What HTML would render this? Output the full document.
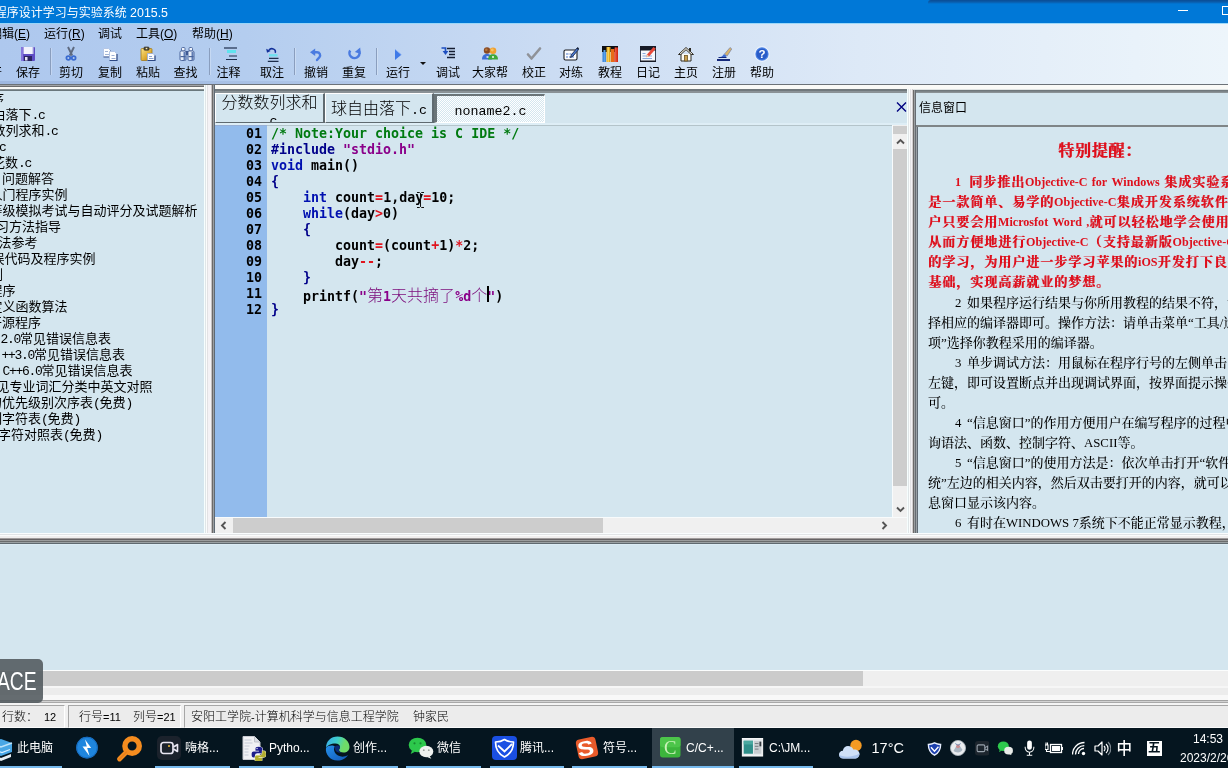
<!DOCTYPE html>
<html lang="zh-CN">
<head>
<meta charset="utf-8">
<title>C/C++程序设计学习与实验系统 2015.5</title>
<style>
*{box-sizing:border-box;margin:0;padding:0}
html,body{width:1228px;height:768px;overflow:hidden;background:#d4e6ef}
body{will-change:transform;position:relative;font-family:"Liberation Sans","Noto Sans CJK SC",sans-serif;font-size:12px;color:#000}
.abs{position:absolute}
.nw{white-space:nowrap}
#title{left:0;top:0;width:1228px;height:23px;background:#0078d7;overflow:hidden}
#title .t{right:1060px;top:3.500px;color:#fff;font-size:12px;line-height:18px}
#title .t span{font-size:12.400px}
#bar{left:0;top:23px;width:1228px;height:61px;background:linear-gradient(rgba(150,215,250,.9),rgba(150,215,250,.9)) 0 0/100% 1px no-repeat,linear-gradient(90deg,rgba(80,100,150,.16),rgba(80,100,150,0) 70%) 0 100%/100% 3px no-repeat,linear-gradient(90deg,#aec8ee 0%,#b4cdef 20%,#cbdcf3 45%,#dde9f7 70%,#edf5fb 100%)}
.menu{top:1.500px;font-size:12px;line-height:18px;color:#000}
.menu u{text-decoration-thickness:1px;text-underline-offset:1px}
.tl{top:43px;font-size:12px;line-height:14px;width:48px;text-align:center;color:#000}
.tsep{top:25px;width:1px;height:27px;background:#8a9ebe;box-shadow:1px 0 0 rgba(255,255,255,.25)}
.ti{top:23px;width:16px;height:16px}
/* frames */
.g{background:#7f8587}
.w{background:#f4f6f7}
/* left list */
#left{left:0;top:91px;width:204px;height:442px;background:#d4e6ef;overflow:hidden;font-family:"Liberation Mono","Noto Sans CJK SC",sans-serif;font-weight:400;font-size:13px}
#left div{position:absolute;white-space:nowrap;line-height:16px;height:16px}
#left .a{letter-spacing:-1.3px}
/* editor */
#tabs{left:215px;top:93px;width:692px;height:30px;background:#d4e6ef}
.tab{top:0;height:30px;border-left:1px solid #fff;border-top:1px solid #fff;border-right:2px solid #5f6a70;border-bottom:1px solid #5f6a70;font-family:"Liberation Mono","Noto Sans CJK SC",sans-serif;font-weight:300;font-size:16px;text-align:center;overflow:hidden;background:#d4e6ef}
.tab.act{top:1px;height:29px;border-left:3px solid #6a7478;border-top:2px solid #6a7478;border-right:1px solid #fff;border-bottom:1px solid #fff;background-color:#e9f2f7;background-image:conic-gradient(#fff 25%,#d4e6ef 0 50%,#fff 0 75%,#d4e6ef 0);background-size:2px 2px}
.tab .a{font-size:13.300px}
#gutter{left:215px;top:125px;width:52px;height:392px;background:#92bbec;border-top:1px solid #98b0d6}
#code{left:267px;top:125px;width:625px;height:392px;background:#d4e6ef;border-top:1px solid #b4c4ca}
.ln,.cl{position:absolute;white-space:pre;font-family:"DejaVu Sans Mono","Liberation Mono",monospace;font-weight:bold;font-size:13.3px;line-height:16px;height:16px;letter-spacing:0}
.ln{right:5px}
.cl{left:4px}
.c-cm{color:#007a10}.c-pp{color:#00008a}.c-st{color:#8a008a}.c-kw{color:#0010b0}.c-op{color:#e0141e}.c-br{color:#00008a}
.zh{font-family:"Noto Sans CJK SC",sans-serif;font-weight:300;font-size:16px;letter-spacing:0;color:#7a0a7a}
/* scrollbars */
.sb{background:#f0f0f0}
.th{background:#cdcdcd}
/* info */
#infoh{left:916px;top:93px;width:312px;height:32px;background:#d4e6ef;font-size:12px;line-height:32px}
#info{left:918px;top:127px;width:310px;height:406px;background:#d4e6ef;overflow:hidden;font-family:"Liberation Serif","Noto Serif CJK SC",serif;font-size:13px}
#info div{position:absolute;white-space:nowrap;line-height:20px;height:20px;left:10px}
#info .r{color:#de0f1c;font-weight:600;letter-spacing:1px;text-shadow:.8px 0 0 #de0f1c}
#info .k{color:#000;font-weight:500}
#info .r .e{letter-spacing:0;font-size:12.100px;font-weight:bold;text-shadow:none}
#info .k .e{font-size:12.800px}
/* status */
#status{left:0;top:705px;width:1228px;height:23px;background:#f0f0f0}
.sp{top:0;height:23px;border-left:1px solid #a6a6a6;border-top:1px solid #a6a6a6;border-right:1px solid #fff;border-bottom:1px solid #fafafa;font-family:"Liberation Sans","Noto Sans CJK SC",sans-serif;font-weight:300;color:#000;font-size:12px;line-height:22px;background:#ececec}
.sp span{position:absolute;white-space:nowrap;top:0}
.sp span.e,.sp span span.e{font-size:11px}
.sp span span{position:static}
/* taskbar */
#task{left:0;top:728px;width:1228px;height:40px;background:#05151f;color:#fff;font-size:12px}
.tb{top:0;height:40px}
.tb .ul{position:absolute;left:0;right:0;bottom:0;height:2px;background:#76b9ed}
.tb .lab{position:absolute;left:36px;top:12px;line-height:16px;white-space:nowrap;color:#fff;font-size:12px}
.tb svg{position:absolute;left:6px;top:8px;width:24px;height:24px}
</style>
</head>
<body>
<div id="title" class="abs"><div class="abs t nw">C/C++程序设计学习与实验系统 <span>2015.5</span></div><div class="abs" style="left:1178px;top:10px;width:10px;height:1px;background:#fff"></div><div class="abs" style="left:1222px;top:6px;width:10px;height:9px;border:1px solid #fff"></div><div class="abs" style="left:928px;top:0;width:300px;height:4px;background:linear-gradient(#0a4c94,#0a5cab 50%,rgba(0,120,215,0));border-top-left-radius:3px"></div></div>
<div id="bar" class="abs"><div class="abs menu nw" style="left:-10px">编辑(<u>E</u>)</div><div class="abs menu nw" style="left:44px">运行(<u>R</u>)</div><div class="abs menu nw" style="left:98px">调试</div><div class="abs menu nw" style="left:136px">工具(<u>O</u>)</div><div class="abs menu nw" style="left:192px">帮助(<u>H</u>)</div><div class="abs tl nw" style="left:4px">保存</div><svg class="abs ti" style="left:20px" viewBox="0 0 16 16"><rect x="1" y="1" width="14" height="14" rx="1" fill="#5d4cc4"/><path d="M1 2a1 1 0 0 1 1-1h1v14h-1a1 1 0 0 1-1-1z" fill="#8576dc"/><rect x="3.500" y="1" width="8.500" height="7" fill="#f1f2fc"/><rect x="12" y="1" width="1.500" height="7" fill="#cfd0ee"/><rect x="4" y="10" width="8" height="5" fill="#2b2360"/><rect x="5" y="11" width="2.500" height="3.500" fill="#e6e6f6"/></svg><div class="abs tl nw" style="left:47px">剪切</div><svg class="abs ti" style="left:63px" viewBox="0 0 16 16"><path d="M5 1l4.200 8.500M11 1l-4.200 8.500" stroke="#5e6a80" stroke-width="1.900" fill="none"/><circle cx="5.300" cy="12" r="1.900" fill="none" stroke="#3a6bd0" stroke-width="1.800"/><circle cx="10.700" cy="12" r="1.900" fill="none" stroke="#3a6bd0" stroke-width="1.800"/></svg><div class="abs tl nw" style="left:86px">复制</div><svg class="abs ti" style="left:102px" viewBox="0 0 16 16"><path d="M1.500 2.500h5l2 2v6.500h-7z" fill="#fdfeff" stroke="#b4c6e6" stroke-width="1"/><path d="M8.500 4.500v6.500h-7" fill="none" stroke="#3a568f" stroke-width="1"/><path d="M3 5.500h3M3 8.500h4" stroke="#8aa2cc" stroke-width=".800"/><path d="M7.500 5.500h5l2.500 2.500v6.500h-7.500z" fill="#fdfeff" stroke="#b4c6e6" stroke-width="1"/><path d="M15 8v6.500h-7.500" fill="none" stroke="#2c4884" stroke-width="1.200"/><path d="M9.500 9.500h3M9.500 12.500h4" stroke="#7f98c6" stroke-width=".800"/></svg><div class="abs tl nw" style="left:124px">粘贴</div><svg class="abs ti" style="left:140px" viewBox="0 0 16 16"><defs><linearGradient id="pg" x1="0" y1="0" x2="1" y2="1"><stop offset="0" stop-color="#fbe58a"/><stop offset=".55" stop-color="#e0ae35"/><stop offset="1" stop-color="#a87818"/></linearGradient></defs><rect x="1" y="2.500" width="11" height="12" rx="1" fill="url(#pg)" stroke="#a07a20" stroke-width=".800"/><rect x="4" y="1" width="5" height="3.200" rx=".800" fill="#4a4536" stroke="#2c2a20" stroke-width=".600"/><rect x="5.700" y="1.800" width="1.600" height="1.400" fill="#f4e8b8"/><path d="M7.500 7.500h5.500l2 2v5h-7.500z" fill="#fdfdff" stroke="#9fb0d4" stroke-width=".900"/><path d="M15 9.500v5h-7.500" fill="none" stroke="#2c4884" stroke-width="1.200"/><path d="M9 10.500h3M9 12.500h4.500" stroke="#7f98c6" stroke-width=".900"/></svg><div class="abs tl nw" style="left:161.5px">查找</div><svg class="abs ti" style="left:179px" viewBox="0 0 16 16"><rect x="2.500" y="1.500" width="3.500" height="3.500" rx="1" fill="#eef3fb" stroke="#48639a" stroke-width=".900"/><rect x="10" y="1.500" width="3.500" height="3.500" rx="1" fill="#eef3fb" stroke="#48639a" stroke-width=".900"/><rect x="6.500" y="5" width="3" height="4" fill="#3f5a94"/><rect x="1" y="5" width="6" height="9.500" rx="1.300" fill="#e6edf8" stroke="#3f5a94" stroke-width=".900"/><rect x="9" y="5" width="6" height="9.500" rx="1.300" fill="#e6edf8" stroke="#3f5a94" stroke-width=".900"/><rect x="4.500" y="6" width="2" height="8" fill="#5f7cb4"/><rect x="12.500" y="6" width="2" height="8" fill="#5f7cb4"/><rect x="1.500" y="10" width="5" height="1.200" fill="#48639a"/><rect x="9.500" y="10" width="5" height="1.200" fill="#48639a"/></svg><div class="abs tl nw" style="left:204.5px">注释</div><svg class="abs ti" style="left:221px" viewBox="0 0 16 16"><path d="M3 2h13" stroke="#1d2c4a" stroke-width="1.200"/><path d="M6 5.500h9" stroke="#5fe2ee" stroke-width="3"/><path d="M8 10h8M5 13.500h11" stroke="#1d2c4a" stroke-width="1.200"/></svg><div class="abs tl nw" style="left:248px">取注</div><svg class="abs ti" style="left:264px" viewBox="0 0 16 16"><path d="M11 6.800a3.400 2.700 0 1 0-6-2.600" fill="none" stroke="#12309a" stroke-width="1.600"/><path d="M2.200 2.800l.800 4 3.600-1.800z" fill="#12309a"/><path d="M5 9.300h8.500" stroke="#6fe0ee" stroke-width="2.400"/><path d="M5 12.400h9.500M3.800 15.400h10.700" stroke="#1d2c4a" stroke-width="1.100"/></svg><div class="abs tl nw" style="left:292px">撤销</div><svg class="abs ti" style="left:308px" viewBox="0 0 16 16"><path d="M5.500 6.200h3.500a3.100 3.100 0 0 1 2.400 5.100l-2.400 2.700" fill="none" stroke="#4a7be0" stroke-width="2.400" stroke-linecap="round"/><path d="M7.200 2.500l-5.200 3.800 5.200 3.600z" fill="#4a7be0"/></svg><div class="abs tl nw" style="left:330px">重复</div><svg class="abs ti" style="left:346px" viewBox="0 0 16 16"><path d="M4.200 4.500a5 5 0 1 0 8.200-.500" fill="none" stroke="#4a7be0" stroke-width="2.500"/><path d="M8.800 6l5.400-4.500 .600 6.500z" fill="#4a7be0"/></svg><div class="abs tl nw" style="left:374px">运行</div><svg class="abs ti" style="left:390px" viewBox="0 0 16 16"><path d="M5 3.300l6.400 5.400-6.400 5.400z" fill="#3f7ae8"/><path d="M5 3.300l6.400 5.400" stroke="#8fb4f4" stroke-width=".800"/></svg><div class="abs tl nw" style="left:424px">调试</div><svg class="abs ti" style="left:440px" viewBox="0 0 16 16"><path d="M7 2.500h8M9 5.500h6M9 8.500h6M7 11.500h8" stroke="#141c30" stroke-width="1.400"/><path d="M1.500 2h4v4" fill="none" stroke="#1e4fc0" stroke-width="1.700"/><path d="M2.600 5l2.900 4 2.900-4z" fill="#1e4fc0"/></svg><div class="abs tl nw" style="left:466px">大家帮</div><svg class="abs ti" style="left:482px" viewBox="0 0 16 16"><circle cx="5" cy="4.500" r="3.200" fill="#8a4a22"/><circle cx="4.300" cy="3.800" r="1.300" fill="#c98a4a" opacity=".7"/><path d="M0 13.500c0-4 2.200-5.500 5-5.500s5 1.500 5 5.500z" fill="#3d6fd6"/><circle cx="11" cy="4.800" r="3.300" fill="#f0a030"/><circle cx="10.300" cy="4" r="1.400" fill="#f8cc70" opacity=".8"/><path d="M6 13.500c0-3.700 2.200-5.200 5-5.200s5 1.500 5 5.200z" fill="#3fa83a"/><rect x="4.500" y="10" width="2" height="2" fill="#fff" opacity=".7"/><rect x="10" y="10" width="2" height="2" fill="#fff" opacity=".7"/></svg><div class="abs tl nw" style="left:510px">校正</div><svg class="abs ti" style="left:526px" viewBox="0 0 16 16"><path d="M2 8.500l3.500 4 8.500-10" fill="none" stroke="#8f9298" stroke-width="2.600" stroke-linecap="round" stroke-linejoin="round"/></svg><div class="abs tl nw" style="left:547px">对练</div><svg class="abs ti" style="left:563px" viewBox="0 0 16 16"><rect x="1" y="4" width="13" height="10" rx="1.500" fill="#fdfdfd" stroke="#1b1d22" stroke-width="1.100"/><path d="M3 8h2.500M6.500 8h2M3 11h2M6 11h5" stroke="#4d78cc" stroke-width="1.200"/><path d="M7.500 11.500l.800-2.700 6-7 1.600 1.400-6 7z" fill="#4a78d0" stroke="#16213a" stroke-width=".800"/><path d="M13.500 2.600l1.200-1.400 1.300 1.100-1.200 1.400z" fill="#16213a"/></svg><div class="abs tl nw" style="left:586px">教程</div><svg class="abs ti" style="left:602px" viewBox="0 0 16 16"><rect x="0" y="0" width="16" height="6" fill="#0d0e12"/><rect x=".500" y="6" width="3.500" height="10" fill="#2f7bd4"/><rect x="1.500" y="4" width="2" height="12" fill="#5aa0ea"/><rect x="4.500" y="1" width="4" height="15" fill="#e5a81c"/><rect x="5.500" y="1" width="1.500" height="15" fill="#f8d25a"/><rect x="9" y="3" width="3.500" height="13" fill="#e86a18"/><rect x="12.500" y="1.500" width="3.500" height="14.500" fill="#d42b16"/><rect x="13.200" y="1.500" width="1.200" height="14.500" fill="#f0604a"/></svg><div class="abs tl nw" style="left:624px">日记</div><svg class="abs ti" style="left:640px" viewBox="0 0 16 16"><rect x=".500" y=".500" width="15" height="15" fill="#f6f8fd" stroke="#3b4254" stroke-width="1"/><rect x="0" y="0" width="16" height="4.500" fill="#161a26"/><rect x="0" y="14.500" width="16" height="1.500" fill="#161a26"/><path d="M2.500 7.500h3M2.500 10h9.500M2.500 12.500h9.500" stroke="#8aa8dc" stroke-width="1.200"/><path d="M7 8.500l6.500-7.500 2.300 1.800-6.500 7.500-2.800.900z" fill="#e8483a"/><path d="M7 8.500l-.500 2.700 2.800-.900z" fill="#f3d9b0"/></svg><div class="abs tl nw" style="left:662px">主页</div><svg class="abs ti" style="left:678px" viewBox="0 0 16 16"><path d="M3 8v7h10v-7" fill="#fbfaf4" stroke="#2d2a22" stroke-width="1"/><path d="M8 1.500l7.500 7h-2.300l-5.200-4.800-5.200 4.800h-2.300z" fill="#fffdf2" stroke="#2d2a22" stroke-width="1" stroke-linejoin="round"/><rect x="11" y="2" width="2" height="3.500" fill="#2d2a22"/><rect x="6.500" y="9.500" width="3" height="5.500" fill="#c9a050" stroke="#6a5424" stroke-width=".800"/></svg><div class="abs tl nw" style="left:700px">注册</div><svg class="abs ti" style="left:716px" viewBox="0 0 16 16"><path d="M1 14h13" stroke="#14287a" stroke-width="2"/><path d="M2.500 11.500c2.500-.300 4.500-1.500 5.500-3.500l2.800 2c-1.500 2-4.800 2.500-8.300 1.500z" fill="#3a68d0"/><path d="M8.500 8l5.500-6.500 1.800 1.400-4.600 7z" fill="#d9b36a" stroke="#6a78a8" stroke-width=".600"/><path d="M2.500 11.500h8" stroke="#14287a" stroke-width="1"/></svg><div class="abs tl nw" style="left:738px">帮助</div><svg class="abs ti" style="left:754px" viewBox="0 0 16 16"><circle cx="8" cy="8" r="7.300" fill="#4d84e4" stroke="#eaf1fc" stroke-width="1.300"/><circle cx="8" cy="8" r="5.600" fill="#2a5cc8"/><text x="8" y="12.200" font-family="Liberation Sans,sans-serif" font-weight="700" font-size="11.500" text-anchor="middle" fill="#fff">?</text></svg><div class="abs tsep" style="left:50px"></div><div class="abs tsep" style="left:209px"></div><div class="abs tsep" style="left:294px"></div><div class="abs tsep" style="left:376px"></div><div class="abs" style="left:420px;top:39px;width:0;height:0;border-left:3px solid transparent;border-right:3px solid transparent;border-top:3px solid #111"></div><div class="abs nw" style="left:-10px;top:43px;font-size:12px;line-height:14px">开</div></div>
<div class="abs" style="left:0px;top:84px;width:1228px;height:1px;background:#6c7278"></div><div class="abs" style="left:0px;top:85px;width:1228px;height:4px;background:#fafaf7"></div><div class="abs" style="left:0px;top:85px;width:204px;height:1px;background:#a2a3a6"></div><div class="abs" style="left:0px;top:86px;width:204px;height:1px;background:#6c6c6c"></div><div class="abs" style="left:0px;top:87px;width:204px;height:2px;background:#fafaf7"></div><div class="abs" style="left:0px;top:89px;width:204px;height:1px;background:#8a9296"></div><div class="abs" style="left:0px;top:90px;width:204px;height:1px;background:#6a787c"></div><div class="abs" style="left:212px;top:89px;width:695px;height:2px;background:#70787c"></div><div class="abs" style="left:212px;top:91px;width:695px;height:2px;background:#8a9296"></div><div class="abs" style="left:913px;top:89px;width:315px;height:1px;background:#dfe3e3"></div><div class="abs" style="left:913px;top:90px;width:315px;height:1px;background:#70787c"></div><div class="abs" style="left:913px;top:91px;width:315px;height:1px;background:#7c8488"></div><div class="abs" style="left:913px;top:92px;width:315px;height:1px;background:#8a9296"></div><div class="abs" style="left:204px;top:85px;width:1px;height:453px;background:#f6fefe"></div><div class="abs" style="left:205px;top:85px;width:1px;height:453px;background:#e0e6e8"></div><div class="abs" style="left:206px;top:85px;width:1px;height:453px;background:#fafcfc"></div><div class="abs" style="left:207px;top:85px;width:1px;height:453px;background:#e2e2e4"></div><div class="abs" style="left:208px;top:85px;width:3px;height:453px;background:#f4f2f5"></div><div class="abs" style="left:211px;top:85px;width:1px;height:453px;background:#c4c2c2"></div><div class="abs" style="left:212px;top:85px;width:1px;height:453px;background:#6c6a6a"></div><div class="abs" style="left:213px;top:85px;width:1px;height:453px;background:#9a9ea0"></div><div class="abs" style="left:214px;top:85px;width:1px;height:453px;background:#5f6a74"></div><div class="abs" style="left:907px;top:89px;width:1px;height:449px;background:#f6fefe"></div><div class="abs" style="left:908px;top:89px;width:1px;height:449px;background:#e0e6e8"></div><div class="abs" style="left:909px;top:89px;width:1px;height:449px;background:#fafcfc"></div><div class="abs" style="left:910px;top:89px;width:1px;height:449px;background:#e2e2e4"></div><div class="abs" style="left:911px;top:89px;width:1px;height:449px;background:#f4f2f5"></div><div class="abs" style="left:912px;top:89px;width:1px;height:449px;background:#d0cece"></div><div class="abs" style="left:913px;top:90px;width:1px;height:448px;background:#6c6a6a"></div><div class="abs" style="left:914px;top:90px;width:1px;height:448px;background:#9a9ea0"></div><div class="abs" style="left:915px;top:90px;width:1px;height:448px;background:#666c72"></div><div class="abs" style="left:916px;top:125px;width:1px;height:408px;background:#9aa0a4"></div><div class="abs" style="left:917px;top:125px;width:1px;height:408px;background:#5f6a74"></div><div class="abs" style="left:0px;top:533px;width:1228px;height:1px;background:#fafdfe"></div><div class="abs" style="left:0px;top:534px;width:1228px;height:1px;background:#e2e4e6"></div><div class="abs" style="left:0px;top:535px;width:1228px;height:1px;background:#fbfcfc"></div><div class="abs" style="left:0px;top:536px;width:1228px;height:2px;background:#f0eeee"></div><div class="abs" style="left:0px;top:538px;width:1228px;height:1px;background:#a09c9c"></div><div class="abs" style="left:0px;top:539px;width:1228px;height:1px;background:#666264"></div><div class="abs" style="left:0px;top:540px;width:1228px;height:1px;background:#9a9c9c"></div><div class="abs" style="left:0px;top:541px;width:1228px;height:1px;background:#6a6c6c"></div><div class="abs" style="left:0px;top:542px;width:1228px;height:1px;background:#9aa0a2"></div><div class="abs" style="left:0px;top:543px;width:1228px;height:1px;background:#5f6a70"></div><div class="abs" style="left:0px;top:544px;width:1228px;height:1px;background:#dcecf4"></div>
<div id="left" class="abs"><div style="right:200px;top:1px">序</div><div style="right:159.5px;top:17px">自由落下<span class="a">.c</span></div><div style="right:146.5px;top:33px">数数列求和<span class="a">.c</span></div><div style="right:198.5px;top:49px"><span class="a">.c</span></div><div style="right:173px;top:65px">仙花数<span class="a">.c</span></div><div style="right:150px;top:81px">目问题解答</div><div style="right:136.5px;top:97px">入门程序实例</div><div style="right:6.5px;top:113px">等级模拟考试与自动评分及试题解析</div><div style="right:143px;top:129px">习方法指导</div><div style="right:166.5px;top:145px">语法参考</div><div style="right:108.5px;top:161px">误代码及程序实例</div><div style="right:201px;top:177px">例</div><div style="right:188.5px;top:193px">程序</div><div style="right:136.5px;top:209px">定义函数算法</div><div style="right:163px;top:225px">开源程序</div><div style="right:93px;top:241px"><span class="a">2.0</span>常见错误信息表</div><div style="right:79px;top:257px"><span class="a">++3.0</span>常见错误信息表</div><div style="right:71.5px;top:273px"><span class="a">C++6.0</span>常见错误信息表</div><div style="right:51.5px;top:289px">常见专业词汇分类中英文对照</div><div style="right:72px;top:305px">的优先级别次序表<span class="a">(</span>免费<span class="a">)</span></div><div style="right:124px;top:321px">制字符表<span class="a">(</span>免费<span class="a">)</span></div><div style="right:102px;top:337px"><span class="a">I</span>字符对照表<span class="a">(</span>免费<span class="a">)</span></div></div>
<div id="tabs" class="abs"><div class="abs tab" style="left:0;width:110px;line-height:17px;white-space:normal;padding-top:2px">分数数列求和<br><span class="a">.c</span></div><div class="abs tab" style="left:110px;width:109px;line-height:33px">球自由落下<span class="a">.c</span></div><div class="abs tab act" style="left:219px;width:111px;line-height:31px"><span class="a">noname2.c</span></div><svg class="abs" style="left:681px;top:9px;width:11px;height:10px" viewBox="0 0 11 10"><path d="M1 .500l9 9M10 .500l-9 9" stroke="#000080" stroke-width="1.400"/></svg></div>
<div class="abs" style="left:215px;top:123px;width:692px;height:2px;background:#deeef6"></div>
<div id="gutter" class="abs"><div class="ln" style="top:0px">01</div><div class="ln" style="top:16px">02</div><div class="ln" style="top:32px">03</div><div class="ln" style="top:48px">04</div><div class="ln" style="top:64px">05</div><div class="ln" style="top:80px">06</div><div class="ln" style="top:96px">07</div><div class="ln" style="top:112px">08</div><div class="ln" style="top:128px">09</div><div class="ln" style="top:144px">10</div><div class="ln" style="top:160px">11</div><div class="ln" style="top:176px">12</div></div>
<div id="code" class="abs"><div class="cl" style="top:0px"><span class="c-cm">/* Note:Your choice is C IDE */</span></div><div class="cl" style="top:16px"><span class="c-pp">#include </span><span class="c-st">&quot;stdio.h&quot;</span></div><div class="cl" style="top:32px"><span class="c-kw">void</span> main()</div><div class="cl" style="top:48px"><span class="c-br">{</span></div><div class="cl" style="top:64px">    <span class="c-kw">int</span> count<span class="c-op">=</span>1,day<span class="c-op">=</span>10;</div><div class="cl" style="top:80px">    <span class="c-kw">while</span>(day<span class="c-op">&gt;</span>0)</div><div class="cl" style="top:96px">    <span class="c-br">{</span></div><div class="cl" style="top:112px">        count<span class="c-op">=</span>(count<span class="c-op">+</span>1)<span class="c-op">*</span>2;</div><div class="cl" style="top:128px">        day<span class="c-op">--</span>;</div><div class="cl" style="top:144px">    <span class="c-br">}</span></div><div class="cl" style="top:160px">    printf(<span class="c-st">&quot;<span class="zh">第</span>1<span class="zh">天共摘了</span>%d<span class="zh">个</span>&quot;</span>)</div><div class="cl" style="top:176px"><span class="c-br">}</span></div><div class="abs" style="left:220px;top:160px;width:2px;height:16px;background:#000"></div><svg class="abs" style="left:150px;top:66px;width:7px;height:16px" viewBox="0 0 7 16"><path d="M0 .500h2.500l1 1 1-1h2.500M3.500 1.500v13M0 15.500h2.500l1-1 1 1h2.500" fill="none" stroke="#111" stroke-width="1"/></svg></div>
<div class="abs sb" style="left:892px;top:125px;width:15px;height:392px;border-left:1px solid #f8fbfc"></div><div class="abs th" style="left:893px;top:126px;width:14px;height:360px"></div><div class="abs sb" style="left:893px;top:134px;width:14px;height:15px"></div><svg class="abs" style="left:896.0px;top:138.0px;width:9px;height:7px" viewBox="0 0 9 7"><path d="M1 5.500l3.500-3.500 3.500 3.500" fill="none" stroke="#555" stroke-width="1.900"/></svg><svg class="abs" style="left:896.0px;top:505.5px;width:9px;height:7px" viewBox="0 0 9 7"><path d="M1 1.500l3.500 3.500 3.500-3.500" fill="none" stroke="#555" stroke-width="1.900"/></svg><div class="abs sb" style="left:215px;top:517px;width:692px;height:16px;border-top:1px solid #f8fbfc"></div><div class="abs th" style="left:233px;top:518px;width:370px;height:15px"></div><svg class="abs" style="left:220.0px;top:521.0px;width:7px;height:9px" viewBox="0 0 7 9"><path d="M5.500 1l-3.500 3.500 3.500 3.500" fill="none" stroke="#555" stroke-width="1.900"/></svg><svg class="abs" style="left:880.5px;top:521.0px;width:7px;height:9px" viewBox="0 0 7 9"><path d="M1.500 1l3.500 3.500-3.500 3.500" fill="none" stroke="#555" stroke-width="1.900"/></svg>
<div id="infoh" class="abs nw"><span style="position:absolute;left:3px;top:-1px;font-size:12px">信息窗口</span></div>
<div class="abs g" style="left:916px;top:125px;width:312px;height:2px"></div>
<div id="info" class="abs"><div class="r" style="left:140px;top:14px;font-size:16px;letter-spacing:.7px">特别提醒：</div><div class="r" style="top:45px"><span style="margin-left:27px"><span class="e">1</span></span><span style="margin-left:8px">同步推出<span class="e">Objective-C</span> <span class="e">for</span> <span class="e">Windows</span> 集成实验系统，它</span></div><div class="r" style="top:65px">是一款简单、易学的<span class="e">Objective-C</span>集成开发系统软件。用</div><div class="r" style="top:85px">户只要会用<span class="e">Microsfot</span> <span class="e">Word</span> <span class="e">,</span>就可以轻松地学会使用它，</div><div class="r" style="top:105px">从而方便地进行<span class="e">Objective-C</span>（支持最新版<span class="e">Objective-C</span> <span class="e">2.0</span>）</div><div class="r" style="top:125px">的学习，为用户进一步学习苹果的<span class="e">iOS</span>开发打下良好的</div><div class="r" style="top:145px">基础，实现高薪就业的梦想。</div><div class="k" style="top:166px"><span style="margin-left:27px"><span class="e">2</span></span><span style="margin-left:5.500px">如果程序运行结果与你所用教程的结果不符，请选</span></div><div class="k" style="top:186px">择相应的编译器即可。操作方法：请单击菜单“工具<span class="e">/</span>选</div><div class="k" style="top:206px">项”选择你教程采用的编译器。</div><div class="k" style="top:226px"><span style="margin-left:27px"><span class="e">3</span></span><span style="margin-left:5.500px">单步调试方法：用鼠标在程序行号的左侧单击鼠标</span></div><div class="k" style="top:246px">左键，即可设置断点并出现调试界面，按界面提示操作即</div><div class="k" style="top:266px">可。</div><div class="k" style="top:286px"><span style="margin-left:27px"><span class="e">4</span></span><span style="margin-left:5.500px">“信息窗口”的作用方便用户在编写程序的过程中查</span></div><div class="k" style="top:306px">询语法、函数、控制字符、<span class="e">ASCII</span>等。</div><div class="k" style="top:326px"><span style="margin-left:27px"><span class="e">5</span></span><span style="margin-left:5.500px">“信息窗口”的使用方法是：依次单击打开“软件系</span></div><div class="k" style="top:346px">统”左边的相关内容，然后双击要打开的内容，就可以在信</div><div class="k" style="top:366px">息窗口显示该内容。</div><div class="k" style="top:386px"><span style="margin-left:27px"><span class="e">6</span></span><span style="margin-left:5.500px">有时在<span class="e">WINDOWS</span> <span class="e">7</span>系统下不能正常显示教程，解决</span></div></div>
<div class="abs" style="left:0;top:670px;width:1228px;height:1px;background:#fbfdfd"></div><div class="abs" style="left:0;top:671px;width:1228px;height:15px;background:#efefef"></div><div class="abs" style="left:0;top:671px;width:863px;height:15px;background:#cbcbcb"></div><div class="abs" style="left:0;top:686px;width:1228px;height:2px;background:#f6f6f6"></div><div class="abs" style="left:0;top:688px;width:1228px;height:7px;background:#ececec"></div><div class="abs" style="left:0;top:695px;width:1228px;height:5px;background:#f8f8f8"></div><div class="abs" style="left:0;top:700px;width:1228px;height:1px;background:#a2a2a2"></div><div class="abs" style="left:0;top:701px;width:1228px;height:1px;background:#d2d2d2"></div><div class="abs" style="left:0;top:702px;width:1228px;height:1px;background:#a8a8a8"></div><div class="abs" style="left:0;top:703px;width:1228px;height:2px;background:#f4f4f4"></div>
<div id="status" class="abs"><div class="abs sp" style="left:-2px;width:67px"><span style="left:3px">行数：</span><span style="left:45px" class="e">12</span></div><div class="abs sp" style="left:68px;width:113px"><span style="left:10px">行号<span class="e">=11</span></span><span style="left:64px">列号<span class="e">=21</span></span></div><div class="abs sp" style="left:184px;width:1046px"><span style="left:6px">安阳工学院<span class="e">-</span>计算机科学与信息工程学院</span><span style="left:228px">钟家民</span></div></div>
<div class="abs" style="left:-10px;top:659px;width:53px;height:44px;border-radius:5px;background:rgba(84,92,96,.9);color:#fff;font-size:26px;line-height:44px;font-family:'Liberation Sans',sans-serif;white-space:nowrap"><span style="position:absolute;left:6.700px;top:0;transform-origin:0 50%;transform:scaleX(.74)">ACE</span></div>
<div id="task" class="abs"><div class="abs tb" style="left:-21px;width:83px;"><svg style="left:9px;top:9px;width:26px;height:24px" viewBox="0 0 26 24"><path d="M2 6l11-4 11 4v9l-11 4-11-4z" fill="#49a7e6"/><path d="M2 6l11 4 11-4" fill="none" stroke="#bfe3fa" stroke-width="1.500"/><path d="M3 17l10 4 10-4v3l-10 4-10-4z" fill="#e8eef3"/><path d="M8 13.500l6 2 8-3" stroke="#d9efff" stroke-width="1.200" fill="none"/></svg><span class="lab" style="left:38px">此电脑</span><span class="ul" style="left:21px;right:0px"></span></div><div class="abs tb" style="left:75px;width:26px"><svg style="left:0px;top:8px;width:24px;height:24px" viewBox="0 0 24 24"><circle cx="12" cy="11.600" r="10.800" fill="#1f86de"/><circle cx="12" cy="11.600" r="10.300" fill="none" stroke="#1568bc" stroke-width="1"/><path d="M10 3.500l6.200 8.500h-4l2.300 8-7-9.500h4.300z" fill="#fff"/></svg></div><div class="abs tb" style="left:114px;width:30px"><svg style="left:1px;top:6px;width:30px;height:30px" viewBox="0 0 30 30"><circle cx="17.100" cy="12" r="7.200" fill="none" stroke="#f58c1f" stroke-width="5.400"/><path d="M11.500 18l-7 7" stroke="#f58c1f" stroke-width="4.800" stroke-linecap="round"/><path d="M11.500 18l-7 7" stroke="#d9731a" stroke-width="1.500" stroke-linecap="round" opacity=".5"/></svg></div><div class="abs tb" style="left:155px;width:76px;"><svg style="left:2px;top:8px;width:24px;height:24px" viewBox="0 0 24 24"><rect x="0" y="0" width="24" height="24" rx="5" fill="#1b222c"/><rect x="4" y="6.500" width="12" height="11" rx="2.500" fill="none" stroke="#e9e6f2" stroke-width="1.700"/><path d="M16.500 11l4-2.500v7l-4-2.500" fill="none" stroke="#e9e6f2" stroke-width="1.600" stroke-linejoin="round"/><circle cx="12" cy="10" r="1" fill="#f6c23a"/></svg><span class="lab" style="left:30px">嗨格...</span><span class="ul" style="left:0px;right:1px"></span></div><div class="abs tb" style="left:239px;width:76px;"><svg style="left:3px;top:8px;width:24px;height:25px" viewBox="0 0 24 25"><path d="M1 .500h11.500l5.500 5.500v17.500h-17z" fill="#f1f1f4" stroke="#c9cbd2" stroke-width="1"/><path d="M12.500 .500v5.500h5.500" fill="#dcdde4" stroke="#b9bcc4" stroke-width=".800"/><path d="M2.500 4h7M2.500 7h8M2.500 10h5M2.500 13h4M2.500 16h4M2.500 19h4" stroke="#c5cad6" stroke-width="1"/><g transform="translate(3.600 4.800) scale(.86)"><path d="M15 7c-3 0-3.500 1-3.500 2.500v2h4v1h-6c-2 0-2.500 1.500-2.500 3.500s.500 3.500 2.500 3.500h1.500v-2.500c0-1.500 1-2.500 2.500-2.500h4c1.200 0 2-.800 2-2v-3c0-1.500-1.500-2.500-4.500-2.500z" fill="#1c1c8a" stroke="#f4f4fa" stroke-width="1.200" paint-order="stroke"/><path d="M15.500 24.500c3 0 3.500-1 3.500-2.500v-2h-4v-1h6c2 0 2.500-1.500 2.500-3.500s-.500-3.500-2.500-3.500h-1.500v2.500c0 1.500-1 2.500-2.500 2.500h-4c-1.200 0-2 .800-2 2v3c0 1.500 1.500 2.500 4.500 2.500z" fill="#b2ae2e" stroke="#f2f2c8" stroke-width="1.200" paint-order="stroke"/><circle cx="13.300" cy="9" r=".800" fill="#e8e8ff"/></g></svg><span class="lab" style="left:30px">Pytho...</span><span class="ul" style="left:0px;right:1px"></span></div><div class="abs tb" style="left:322px;width:77px;"><svg style="left:3px;top:8px;width:25px;height:25px" viewBox="0 0 25 25"><defs><linearGradient id="eg1" x1="0" y1="0" x2="1" y2=".3"><stop offset="0" stop-color="#3aa8ee"/><stop offset=".5" stop-color="#3fd0cc"/><stop offset=".85" stop-color="#6fdc68"/></linearGradient><linearGradient id="eg2" x1="0" y1="0" x2="1" y2="1"><stop offset="0" stop-color="#2590ea"/><stop offset="1" stop-color="#1258b8"/></linearGradient></defs><path d="M1 12C1 5 6 .500 12.500 .500 19.500 .500 24.500 5.500 24.500 11c0 3.500-2.500 5.500-6 5.500-3 0-4.500-1.200-4.500-2.500 0-1 1-1.500 1-3 0-2-2-3.500-4.500-3.500C6 7.500 2 9.500 1 12z" fill="url(#eg1)"/><path d="M1 12c-1 6 4 12.500 11.500 12.500 4.500 0 8.500-2 10.500-5.500-3 2-7 2.200-10 .500C9 17.200 8.200 13 9.800 10.500 8 9 3 9.300 1 12z" fill="url(#eg2)"/><path d="M9.800 10.500c1.700-1.500 4.700-1 5.200.500 0 1.500-1 2-1 3s.800 2 2.500 2.400C13 17.500 9 15 9.800 10.500z" fill="#0b2c74"/></svg><span class="lab" style="left:31px">创作...</span><span class="ul" style="left:0px;right:1px"></span></div><div class="abs tb" style="left:406px;width:76px;"><svg style="left:2px;top:9px;width:26px;height:24px" viewBox="0 0 26 24"><ellipse cx="9.500" cy="8" rx="8.800" ry="7.300" fill="#2dc84c"/><path d="M4 13.500l-1.300 3.500 4.300-2.200z" fill="#2dc84c"/><circle cx="6.500" cy="6.300" r="1.100" fill="#178a30"/><circle cx="12.500" cy="6.300" r="1.100" fill="#178a30"/><ellipse cx="18.300" cy="14.500" rx="7" ry="5.800" fill="#eef0ee"/><path d="M21.500 18.800l1.800 3-4.300-1.800z" fill="#eef0ee"/><circle cx="15.800" cy="13.200" r=".900" fill="#9aa09a"/><circle cx="20.800" cy="13.200" r=".900" fill="#9aa09a"/></svg><span class="lab" style="left:31px">微信</span><span class="ul" style="left:0px;right:1px"></span></div><div class="abs tb" style="left:490px;width:75px;"><svg style="left:2px;top:8px;width:25px;height:24px" viewBox="0 0 25 24"><rect x="0" y="0" width="25" height="24" rx="4" fill="#1a4fe3"/><path d="M12.500 3.500C9.500 5.500 6 6 3.500 6c0 7 3 12 9 15 6-3 9-8 9-15-2.500 0-6-.500-9-2.500z" fill="none" stroke="#fff" stroke-width="1.700" stroke-linejoin="round"/><path d="M6 9.500l6.500 6 7.500-7.500" fill="none" stroke="#fff" stroke-width="1.800"/></svg><span class="lab" style="left:30px">腾讯...</span><span class="ul" style="left:0px;right:1px"></span></div><div class="abs tb" style="left:572px;width:76px;"><svg style="left:2px;top:7px;width:26px;height:26px" viewBox="0 0 26 26"><rect x="3" y="3" width="20" height="20" rx="4" fill="#e95b2b" transform="rotate(-12 13 13)"/><text x="0" y="0" font-family="Liberation Sans,sans-serif" font-weight="700" font-size="21" text-anchor="middle" fill="#fff" transform="translate(13 20.500) rotate(-10) scale(1.180 1)">S</text></svg><span class="lab" style="left:31px">符号...</span><span class="ul" style="left:0px;right:1px"></span></div><div class="abs tb" style="left:652px;width:82px;background:#32414b;"><svg style="left:8px;top:9px;width:20.5px;height:20.5px" viewBox="0 0 22 22"><rect x="0" y="0" width="22" height="22" rx="3" fill="#3cb53c"/><rect x="0" y="0" width="22" height="11" rx="3" fill="#4cc54a"/><text x="11" y="18" font-family="Liberation Serif,serif" font-size="20" text-anchor="middle" fill="#c9f2b8">C</text></svg><span class="lab" style="left:34px">C/C+...</span><span class="ul" style="left:0px;right:0px"></span></div><div class="abs tb" style="left:738px;width:76px;"><svg style="left:3px;top:10.3px;width:23px;height:18.5px" viewBox="0 0 23 20"><rect x=".500" y=".500" width="22" height="19" fill="#e9ecef" stroke="#fff" stroke-width="1"/><rect x="2" y="3" width="10" height="14" fill="#2f8f8a"/><rect x="2" y="3" width="10" height="4" fill="#4aa8a0"/><rect x="13" y="3" width="8" height="14" fill="#c9ced2"/><path d="M14 6h4M14 9h4M14 12h4" stroke="#6d7478" stroke-width="1"/><rect x="19" y="4" width="2" height="5" fill="#343a40"/></svg><span class="lab" style="left:31px">C:\JM...</span><span class="ul" style="left:1px;right:1px"></span></div><div class="abs tb" style="left:836px;width:70px"><svg style="left:2px;top:9.5px;width:26px;height:22px" viewBox="0 0 26 22"><circle cx="18" cy="7.500" r="5.700" fill="#f59a23"/><path d="M5.500 20.500c-3 0-4.500-2-4.500-4s1.500-3.800 3.800-3.800c.500-3 2.700-4.700 5.200-4.700 2.600 0 4.500 1.500 5.300 3.500 3.500-.500 6.200 1.500 6.200 4.500 0 2.500-2 4.500-4.500 4.500z" fill="#cfe0f7"/><path d="M5.500 20.500c-3 0-4.500-2-4.500-4 3 3 14 3 20.500-1 0 2.500-2 5-4.500 5z" fill="#a9c4ec"/></svg><span class="lab" style="left:35.500px;top:10px;font-size:14.500px;line-height:20px">17°C</span></div><div class="abs tb tray" style="left:0;width:1228px"><svg style="left:926.5px;top:13.5px;width:15px;height:14px" viewBox="0 0 17 16"><path d="M8.500 1c2.200 1.200 4.600 1.800 7 1.800 0 5.800-2.400 9.800-7 12.200-4.600-2.400-7-6.400-7-12.200 2.400 0 4.800-.600 7-1.800z" fill="#1c3fae" stroke="#e8efff" stroke-width="1.600"/><path d="M4.500 6l4 4.500 4.500-5" fill="none" stroke="#fff" stroke-width="1.600"/></svg><svg style="left:950px;top:12px;width:16px;height:16px" viewBox="0 0 18 18"><circle cx="9" cy="9" r="8.500" fill="#e9ecef"/><circle cx="9" cy="9" r="8.500" fill="none" stroke="#aab3bb" stroke-width="1"/><path d="M4 12c2-3 3-6 5-7 2 1 3 3 5 6-1 2-3 3-5 3s-4-1-5-2z" fill="#a9b6c2"/><circle cx="9" cy="7" r="2.200" fill="#d97a7a" opacity=".7"/><path d="M6 4l3 2 3-2" stroke="#5f7fae" stroke-width="1" fill="none"/></svg><svg style="left:974.5px;top:13px;width:14.5px;height:14.5px" viewBox="0 0 17 17"><rect x="0" y="0" width="17" height="17" rx="3.500" fill="#1d262e"/><rect x="2.500" y="4.500" width="9" height="8" rx="1.700" fill="none" stroke="#98a2ac" stroke-width="1.300"/><path d="M11.800 7.800l3-1.800v5l-3-1.800" fill="none" stroke="#98a2ac" stroke-width="1.200"/></svg><svg style="left:997px;top:13px;width:17px;height:14px" viewBox="0 0 18 16"><ellipse cx="6.500" cy="6" rx="6.300" ry="5.500" fill="#2dc84c"/><path d="M2.500 10l-1 2.500 3-1.500z" fill="#2dc84c"/><ellipse cx="12.500" cy="11" rx="5" ry="4.300" fill="#e9ece9"/><path d="M15 14l1 2.300-3-1.500z" fill="#e9ece9"/></svg><svg style="left:1024px;top:11.5px;width:11px;height:16.5px" viewBox="0 0 13 21"><rect x="3.500" y=".500" width="6" height="12" rx="3" fill="#fff"/><path d="M1 8.500v1.500a5.500 5.500 0 0 0 11 0v-1.500" fill="none" stroke="#fff" stroke-width="1.300"/><path d="M6.500 15.500v3.500M3 19.500h7" stroke="#fff" stroke-width="1.300"/></svg><svg style="left:1045px;top:14px;width:18px;height:12px" viewBox="0 0 18 12"><rect x="5.500" y="2.500" width="11" height="8" fill="none" stroke="#fff" stroke-width="1.300"/><rect x="16.500" y="5" width="1.500" height="3" fill="#fff"/><rect x="7" y="4" width="8" height="5" fill="#fff"/><path d="M0 3h3v4.500h-3zM1 .500v2.500M2.500 .500v2.500M1.500 7.500v2h4" fill="none" stroke="#fff" stroke-width="1.100"/></svg><svg style="left:1072px;top:13px;width:15px;height:15px" viewBox="0 0 15 15"><circle cx="11.500" cy="12.500" r="1.700" fill="#fff"/><path d="M6.500 13a5.500 5.500 0 0 1 5.500-5.500M3.500 13.500a8.800 8.800 0 0 1 8.800-8.800M.500 13.500a12 12 0 0 1 12-12" fill="none" stroke="#fff" stroke-width="1.300"/></svg><svg style="left:1094px;top:13px;width:17px;height:15px" viewBox="0 0 17 15"><path d="M1 5h3l4-4v13l-4-4h-3z" fill="none" stroke="#fff" stroke-width="1.200" stroke-linejoin="round"/><path d="M10 5a3.500 3.500 0 0 1 0 5M12 3a6 6 0 0 1 0 9" fill="none" stroke="#fff" stroke-width="1.200"/><path d="M14 1a9 9 0 0 1 0 13" fill="none" stroke="#7d8890" stroke-width="1.200"/></svg><span class="lab" style="left:1116.500px;top:10.500px;font-size:15.500px;line-height:20px;font-weight:500">中</span><span style="position:absolute;left:1147px;top:13px;width:14.500px;height:14.500px;background:#fff;color:#05151f;font-size:12.500px;line-height:14px;text-align:center;font-weight:700">五</span><span class="lab" style="left:1193px;top:3px;font-size:12px">14:53</span><span class="lab" style="left:1180px;top:22px;font-size:12px">2023/2/26</span></div></div>
</body>
</html>
